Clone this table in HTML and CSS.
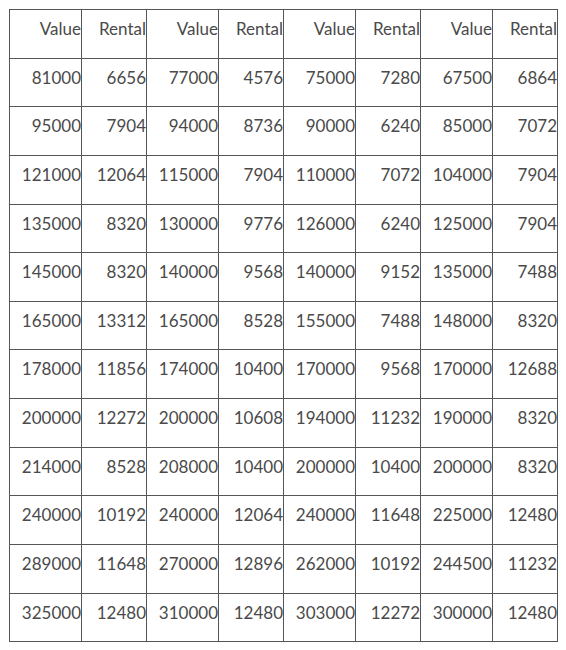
FILE: index.html
```html
<!DOCTYPE html>
<html>
<head>
<meta charset="utf-8">
<link rel="stylesheet" href="styles.css">
</head>
<body>
<table class="rent">
<colgroup>
<col class="cv"><col class="cr"><col class="cv"><col class="cr"><col class="cv"><col class="cr"><col class="cv"><col class="cr">
</colgroup>
<tr><td>Value</td><td>Rental</td><td>Value</td><td>Rental</td><td>Value</td><td>Rental</td><td>Value</td><td>Rental</td></tr>
<tr><td>81000</td><td>6656</td><td>77000</td><td>4576</td><td>75000</td><td>7280</td><td>67500</td><td>6864</td></tr>
<tr><td>95000</td><td>7904</td><td>94000</td><td>8736</td><td>90000</td><td>6240</td><td>85000</td><td>7072</td></tr>
<tr><td>121000</td><td>12064</td><td>115000</td><td>7904</td><td>110000</td><td>7072</td><td>104000</td><td>7904</td></tr>
<tr><td>135000</td><td>8320</td><td>130000</td><td>9776</td><td>126000</td><td>6240</td><td>125000</td><td>7904</td></tr>
<tr><td>145000</td><td>8320</td><td>140000</td><td>9568</td><td>140000</td><td>9152</td><td>135000</td><td>7488</td></tr>
<tr><td>165000</td><td>13312</td><td>165000</td><td>8528</td><td>155000</td><td>7488</td><td>148000</td><td>8320</td></tr>
<tr><td>178000</td><td>11856</td><td>174000</td><td>10400</td><td>170000</td><td>9568</td><td>170000</td><td>12688</td></tr>
<tr><td>200000</td><td>12272</td><td>200000</td><td>10608</td><td>194000</td><td>11232</td><td>190000</td><td>8320</td></tr>
<tr><td>214000</td><td>8528</td><td>208000</td><td>10400</td><td>200000</td><td>10400</td><td>200000</td><td>8320</td></tr>
<tr><td>240000</td><td>10192</td><td>240000</td><td>12064</td><td>240000</td><td>11648</td><td>225000</td><td>12480</td></tr>
<tr><td>289000</td><td>11648</td><td>270000</td><td>12896</td><td>262000</td><td>10192</td><td>244500</td><td>11232</td></tr>
<tr><td>325000</td><td>12480</td><td>310000</td><td>12480</td><td>303000</td><td>12272</td><td>300000</td><td>12480</td></tr>
</table>
</body>
</html>
```
FILE: styles.css
```css
html, body {
  margin: 0;
  padding: 0;
  background: #ffffff;
}
body {
  padding: 9px;
}
.rent {
  border-collapse: collapse;
  table-layout: fixed;
  width: 549px;
  font-family: Lato, "Open Sans", sans-serif;
  font-size: 17px;
  color: #4a4a4a;
}
.cv { width: 72px; }
.cr { width: 65px; }
.rent td {
  border: 1px solid #555555;
  text-align: right;
  padding: 7px 0 16.65px 2px;
  line-height: 24px;
  white-space: nowrap;
  overflow: hidden;
}
```
